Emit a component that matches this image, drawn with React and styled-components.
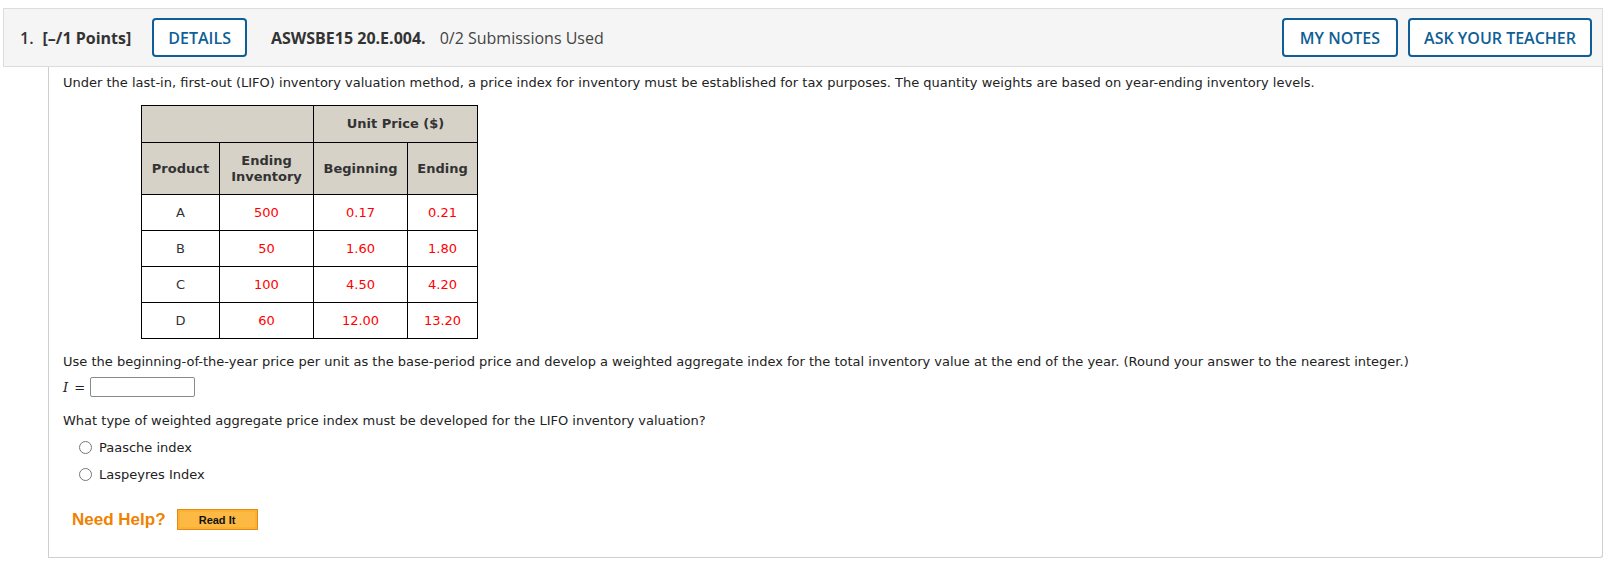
import React from 'react'
import styled, { createGlobalStyle } from 'styled-components'

const GlobalStyle = createGlobalStyle`
  html, body {
    margin: 0;
    padding: 0;
    background: #fff;
  }
  body {
    font-family: "DejaVu Sans", Verdana, sans-serif;
    color: #222;
  }
`

const Page = styled.div`
  padding: 8px 2px 6px 3px;
`

const QuestionHeader = styled.div`
  display: flex;
  align-items: center;
  height: 57px;
  padding: 0 10px 0 16px;
  background: #f5f5f5;
  border: 1px solid #dcdcdc;
  font-family: "Open Sans", "Liberation Sans", sans-serif;
  font-size: 16px;
  color: #333;
`

const Number = styled.span`
  font-weight: 600;
  margin-right: 9px;
`

const Points = styled.span`
  font-weight: 700;
  margin-right: 21px;
`

const OutlineButton = styled.button`
  height: 39px;
  padding: 0 ${(p) => p.$pad || 12}px;
  margin-left: ${(p) => p.$ml || 0}px;
  background: #fff;
  border: 2px solid #0f5f96;
  border-radius: 4px;
  color: #0f5f96;
  font-family: "Open Sans", "Liberation Sans", sans-serif;
  font-size: 16px;
  font-weight: 600;
  cursor: pointer;
`

const Code = styled.span`
  font-weight: 700;
  margin-left: 24px;
  margin-right: 14px;
`

const Muted = styled.span`
  font-weight: 400;
  color: #444;
`

const Spacer = styled.div`
  flex: 1;
`

const Body = styled.div`
  margin-left: 45px;
  border: 1px solid #cfcfcf;
  border-top: none;
  border-bottom-right-radius: 3px;
  padding: 8px 14px 27px 14px;
  font-size: 13px;
`

const Para = styled.p`
  margin: 0;
  line-height: 16px;
`

const PriceTable = styled.table`
  border-collapse: collapse;
  margin: 14px 0 15px 78px;
  font-size: 13px;
  th, td {
    border: 1px solid #000;
    text-align: center;
    padding: 0;
  }
  th {
    background: #d6d2c8;
    color: #333;
    font-weight: 700;
    line-height: 16px;
  }
`

const HeadRow = styled.tr`
  height: ${(p) => p.$h}px;
`

const DataRow = styled.tr`
  height: 36px;
`

const Cell = styled.td`
  color: ${(p) => (p.$red ? '#f00' : '#333')};
  width: ${(p) => p.$w || 'auto'};
`

const AnswerRow = styled.div`
  display: flex;
  align-items: center;
  margin-top: 7px;
  height: 20px;
`

const Var = styled.span`
  font-family: "DejaVu Serif", "Liberation Serif", serif;
  font-style: italic;
  font-size: 13px;
  margin-right: 6px;
`

const Equals = styled.span`
  margin-right: 5px;
`

const AnswerInput = styled.input`
  width: 99px;
  height: 16px;
  border: 1px solid #8a8a8a;
  border-radius: 2px;
  padding: 1px 2px;
`

const Question = styled(Para)`
  margin-top: 16px;
`

const Options = styled.div`
  margin-top: 9px;
  margin-left: 16px;
  display: flex;
  flex-direction: column;
  gap: 8px;
`

const Option = styled.label`
  display: flex;
  align-items: center;
  height: 19px;
`

const Radio = styled.span`
  width: 11px;
  height: 11px;
  border: 1px solid #777;
  border-radius: 50%;
  background: #fff;
  margin-right: 7px;
`

const HelpRow = styled.div`
  display: flex;
  align-items: center;
  margin-top: 25px;
  margin-left: 9px;
`

const HelpLabel = styled.span`
  font-family: "Liberation Sans", Arial, sans-serif;
  font-weight: 700;
  font-size: 17px;
  color: #ef8200;
  margin-right: 11px;
`

const ReadIt = styled.button`
  width: 81px;
  height: 21px;
  padding: 0;
  background: #fcb943;
  border: 1px solid #e08a1e;
  box-shadow: inset 0 0 0 2px #fdb12d;
  font-family: "Liberation Sans", Arial, sans-serif;
  font-weight: 700;
  font-size: 11px;
  color: #111;
`

const rows = [
  ['A', '500', '0.17', '0.21'],
  ['B', '50', '1.60', '1.80'],
  ['C', '100', '4.50', '4.20'],
  ['D', '60', '12.00', '13.20'],
]

export default function App() {
  return (
    <>
      <GlobalStyle />
      <Page>
        <QuestionHeader>
          <Number>1.</Number>
          <Points>[–/1 Points]</Points>
          <OutlineButton $pad={14}>DETAILS</OutlineButton>
          <Code>ASWSBE15 20.E.004.</Code>
          <Muted>0/2 Submissions Used</Muted>
          <Spacer />
          <OutlineButton $pad={16}>MY NOTES</OutlineButton>
          <OutlineButton $pad={14} $ml={10}>ASK YOUR TEACHER</OutlineButton>
        </QuestionHeader>
        <Body>
          <Para>
            Under the last-in, first-out (LIFO) inventory valuation method, a price index for inventory must be
            established for tax purposes. The quantity weights are based on year-ending inventory levels.
          </Para>
          <PriceTable>
            <thead>
              <HeadRow $h={37}>
                <th colSpan={2}></th>
                <th colSpan={2}>Unit Price ($)</th>
              </HeadRow>
              <HeadRow $h={52}>
                <th>Product</th>
                <th>
                  Ending
                  <br />
                  Inventory
                </th>
                <th>Beginning</th>
                <th>Ending</th>
              </HeadRow>
            </thead>
            <tbody>
              {rows.map((r) => (
                <DataRow key={r[0]}>
                  <Cell $w="77px">{r[0]}</Cell>
                  <Cell $red $w="93px">{r[1]}</Cell>
                  <Cell $red $w="93px">{r[2]}</Cell>
                  <Cell $red $w="69px">{r[3]}</Cell>
                </DataRow>
              ))}
            </tbody>
          </PriceTable>
          <Para>
            Use the beginning-of-the-year price per unit as the base-period price and develop a weighted aggregate
            index for the total inventory value at the end of the year. (Round your answer to the nearest integer.)
          </Para>
          <AnswerRow>
            <Var>I</Var>
            <Equals>=</Equals>
            <AnswerInput type="text" />
          </AnswerRow>
          <Question>What type of weighted aggregate price index must be developed for the LIFO inventory valuation?</Question>
          <Options>
            <Option>
              <Radio />
              Paasche index
            </Option>
            <Option>
              <Radio />
              Laspeyres Index
            </Option>
          </Options>
          <HelpRow>
            <HelpLabel>Need Help?</HelpLabel>
            <ReadIt>Read It</ReadIt>
          </HelpRow>
        </Body>
      </Page>
    </>
  )
}
